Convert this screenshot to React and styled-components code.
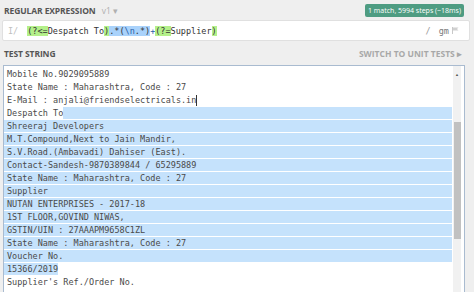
import React from 'react';
import styled, { createGlobalStyle } from 'styled-components';

const GlobalStyle = createGlobalStyle`
  html, body {
    margin: 0;
    padding: 0;
    background: #efefef;
    overflow: hidden;
  }
`;

const lines = [
  { text: 'Mobile No.9029095889' },
  { text: 'State Name : Maharashtra, Code : 27' },
  { text: 'E-Mail : anjali@friendselectricals.in', caret: true },
  { text: 'Despatch To', hl: 'tail' },
  { text: 'Shreeraj Developers', hl: 'full' },
  { text: 'M.T.Compound,Next to Jain Mandir,', hl: 'full' },
  { text: 'S.V.Road.(Ambavadi) Dahiser (East).', hl: 'full' },
  { text: 'Contact-Sandesh-9870389844 / 65295889', hl: 'full' },
  { text: 'State Name : Maharashtra, Code : 27', hl: 'full' },
  { text: 'Supplier', hl: 'full' },
  { text: 'NUTAN ENTERPRISES - 2017-18', hl: 'full' },
  { text: '1ST FLOOR,GOVIND NIWAS,', hl: 'full' },
  { text: 'GSTIN/UIN : 27AAAPM9658C1ZL', hl: 'full' },
  { text: 'State Name : Maharashtra, Code : 27', hl: 'full' },
  { text: 'Voucher No.', hl: 'full' },
  { text: '15366/2019', hl: 'text' },
  { text: "Supplier's Ref./Order No." },
];

const App = () => (
  <Page>
    <GlobalStyle />
    <Header $h={20}>
      <Label>
        REGULAR EXPRESSION <Version>v1 ▾</Version>
      </Label>
      <Badge>1 match, 5994 steps (~18ms)</Badge>
    </Header>

    <RegexBox>
      <Delim>I/</Delim>
      <Code>
        <Tok $bg="#b4f08a">(?&lt;=</Tok>
        Despatch To
        <Tok $bg="#b4f08a">)</Tok>
        <Tok $bg="#a9d2fb">.*(</Tok>
        <Tok $bg="#a9d2fb" $fg="#2a5fa8">\n</Tok>
        <Tok $bg="#a9d2fb">.*)</Tok>
        <Tok $fg="#2a5fa8">+</Tok>
        <Tok $bg="#b4f08a">(?=</Tok>
        Supplier
        <Tok $bg="#b4f08a">)</Tok>
      </Code>
      <Flags>
        /&nbsp;<b>gm</b>
        <svg width="7" height="7" viewBox="0 0 7 7">
          <path d="M0.5 0v7" stroke="#c8c8c8" strokeWidth="1" />
          <path d="M1 0.5h5.5l-1.5 1.5 1.5 1.5H1z" fill="#d0d0d0" />
        </svg>
      </Flags>
    </RegexBox>

    <Header $h={24}>
      <Label>TEST STRING</Label>
      <SwitchLink>SWITCH TO UNIT TESTS ▸</SwitchLink>
    </Header>

    <TestBox>
      <Lines>
        {lines.map((l, i) => (
          <Line key={i} $hl={l.hl}>
            <LineText $hl={l.hl}>
              {l.text}
              {l.caret && <Caret />}
            </LineText>
            {l.hl === 'tail' && <Fill />}
          </Line>
        ))}
      </Lines>
      <Scrollbar>
        <Arrow>▲</Arrow>
        <Thumb />
      </Scrollbar>
    </TestBox>
  </Page>
);

const Page = styled.div`
  width: 474px;
  height: 292px;
  display: flex;
  flex-direction: column;
  padding: 0 4px 0 2px;
  box-sizing: border-box;
  background: #efefef;
  font-family: 'Open Sans', 'Liberation Sans', sans-serif;
`;

const Header = styled.div`
  height: ${(p) => p.$h}px;
  display: flex;
  align-items: center;
  justify-content: space-between;
  padding: 0 2px 0 2px;
  flex-shrink: 0;
`;

const Label = styled.div`
  font-size: 8.5px;
  font-weight: 700;
  color: #555;
  letter-spacing: -0.1px;
`;

const Version = styled.span`
  color: #b0b0b0;
  font-weight: 400;
  margin-left: 4px;
`;

const Badge = styled.div`
  background: #4e9c82;
  color: #fff;
  font-size: 7px;
  border-radius: 2px;
  padding: 2px 3px;
  line-height: 9px;
  margin-right: 4px;
`;

const SwitchLink = styled.div`
  font-size: 8.5px;
  font-weight: 700;
  color: #a8a8a8;
  margin-right: 6px;
`;

const RegexBox = styled.div`
  height: 21px;
  background: #fff;
  border: 1px solid #e0e0e0;
  border-radius: 2px;
  display: flex;
  align-items: center;
  padding: 0 10px 0 5px;
  box-sizing: border-box;
  font-family: 'DejaVu Sans Mono', 'Liberation Mono', monospace;
  font-size: 8.5px;
  color: #333;
`;

const Delim = styled.span`
  color: #c0c0c0;
  margin-right: 9px;
`;

const Code = styled.div`
  flex: 1;
  white-space: pre;
`;

const Tok = styled.span`
  background: ${(p) => p.$bg || 'transparent'};
  color: ${(p) => p.$fg || 'inherit'};
`;

const Flags = styled.div`
  display: flex;
  align-items: center;
  gap: 3px;
  color: #999;
  white-space: pre;

  b {
    font-weight: 400;
    color: #777;
  }
`;

const TestBox = styled.div`
  flex: 1;
  margin-left: 1px;
  margin-right: 5px;
  background: #fff;
  border: 1px solid #a9bbd0;
  border-bottom: none;
  display: flex;
  min-height: 0;
  overflow: hidden;
`;

const Lines = styled.div`
  flex: 1;
  padding-top: 2px;
  font-family: 'DejaVu Sans Mono', 'Liberation Mono', monospace;
  font-size: 8.5px;
  color: #4a4a4a;
`;

const Line = styled.div`
  height: 12px;
  margin-bottom: 1px;
  display: flex;
  align-items: center;
  background: ${(p) => (p.$hl === 'full' ? '#c5e2fc' : 'transparent')};
`;

const LineText = styled.span`
  white-space: pre;
  height: 12px;
  line-height: 12px;
  padding-left: 3px;
  display: flex;
  align-items: center;
  background: ${(p) => (p.$hl === 'text' ? '#c5e2fc' : 'transparent')};
`;

const Fill = styled.span`
  flex: 1;
  height: 12px;
  background: #c5e2fc;
`;

const Caret = styled.span`
  display: inline-block;
  width: 1px;
  height: 11px;
  background: #333;
`;

const Scrollbar = styled.div`
  width: 8px;
  margin: 0 3px 0 1px;
  background: #f1f1f1;
  display: flex;
  flex-direction: column;
  align-items: center;
`;

const Arrow = styled.div`
  font-size: 4px;
  color: #555;
  margin-top: 6px;
  line-height: 5px;
`;

const Thumb = styled.div`
  width: 7px;
  height: 117px;
  margin-top: 45px;
  background: #c1c1c1;
`;

export default App;
